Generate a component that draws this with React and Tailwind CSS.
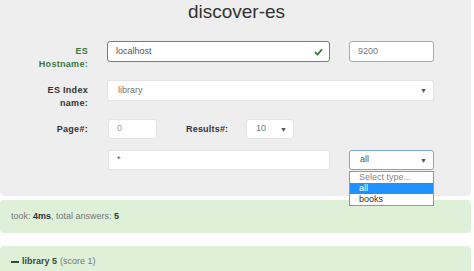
import React from "react";

const font = { fontFamily: "'Liberation Sans', Arial, sans-serif" };

const Caret = () => (
  <span className="text-[7px] leading-none text-[#555]">&#9660;</span>
);

export default function App() {
  return (
    <div
      className="w-[474px] h-[271px] overflow-hidden bg-white text-[#555]"
      style={font}
    >
      {/* jumbotron */}
      <div className="w-[471px] h-[196px] bg-[#eeeeee] rounded-b-[5px] pt-[1px]">
        <h1 className="text-center text-[19px] leading-[22px] text-[#333] ml-[2px]">
          discover-es
        </h1>

        <div className="mt-[18px] flex flex-col">
          {/* hostname row */}
          <div className="flex h-[21px]">
            <label className="w-[88px] pt-[4px] text-right text-[9px] leading-[13px] font-bold text-[#3c763d] tracking-[0.3px]">
              ES
              <br />
              Hostname:
            </label>
            <div className="ml-[19px] relative w-[223px] h-[21px] bg-white border border-[#5f8f5a] rounded-[3px] flex items-center pl-[8px] text-[9px]">
              localhost
              <svg
                className="absolute right-[6px] top-[6px]"
                width="9"
                height="8"
                viewBox="0 0 9 8"
              >
                <path
                  d="M1 4.2 L3.4 6.5 L8 1.3"
                  fill="none"
                  stroke="#3c763d"
                  strokeWidth="1.8"
                />
              </svg>
            </div>
            <div className="ml-[19px] w-[85px] h-[21px] bg-white border border-[#9fb39b] rounded-[3px] flex items-center pl-[8px] text-[9px] text-[#777]">
              9200
            </div>
          </div>

          {/* index row */}
          <div className="flex h-[21px] mt-[18px]">
            <label className="w-[88px] pt-[4px] text-right text-[9px] leading-[13px] font-bold text-[#333] tracking-[0.3px]">
              ES Index
              <br />
              name:
            </label>
            <div className="ml-[19px] w-[327px] h-[21px] bg-white border border-[#e4e4e4] rounded-[3px] flex items-center justify-between pl-[10px] pr-[6px] text-[9px] text-[#777]">
              library
              <Caret />
            </div>
          </div>

          {/* paging row */}
          <div className="flex h-[20px] mt-[18px]">
            <label className="w-[88px] pt-[4px] text-right text-[9px] leading-[13px] font-bold text-[#333] tracking-[0.3px]">
              Page#:
            </label>
            <div className="ml-[20px] w-[49px] h-[20px] bg-white border border-[#e4e4e4] rounded-[3px] flex items-center pl-[8px] text-[9px] text-[#999]">
              0
            </div>
            <label className="ml-[29px] w-[41px] pt-[4px] text-[9px] leading-[13px] font-bold text-[#333] tracking-[0.2px]">
              Results#:
            </label>
            <div className="ml-[19px] w-[48px] h-[20px] bg-white border border-[#e4e4e4] rounded-[3px] flex items-center justify-between pl-[9px] pr-[6px] text-[9px] text-[#777]">
              10
              <Caret />
            </div>
          </div>

          {/* query row */}
          <div className="flex h-[20px] mt-[11px]">
            <div className="ml-[108px] w-[222px] h-[20px] bg-white border border-[#e4e4e4] rounded-[3px] flex items-center pl-[8px] text-[9px]">
              *
            </div>
            <div className="ml-[19px] relative w-[85px] h-[20px] bg-white border border-[#79a6d6] rounded-[3px] flex items-center justify-between pl-[10px] pr-[6px] text-[9px]">
              all
              <Caret />
              <div className="absolute left-[-1px] top-[20px] w-[85px] bg-white border border-[#7f9db9] text-[9px] leading-[11px] z-10">
                <div className="pl-[9px] text-[#888]">Select type...</div>
                <div className="pl-[9px] bg-[#1e90ff] text-white">all</div>
                <div className="pl-[9px] text-[#333]">books</div>
              </div>
            </div>
          </div>
        </div>
      </div>

      {/* stats */}
      <div className="mt-[4px] w-[471px] h-[33px] bg-[#dff0d8] rounded-[4px] flex items-center pl-[11px] text-[9px] text-[#777]">
        <span>
          took: <b className="text-[#333]">4ms</b>, total answers:{" "}
          <b className="text-[#333]">5</b>
        </span>
      </div>

      {/* result */}
      <div className="mt-[13px] w-[471px] h-[33px] bg-[#dff0d8] rounded-[4px] flex items-start pt-[9px] pl-[11px] text-[9px] text-[#777]">
        <span className="flex items-center">
          <span className="inline-block w-[8px] h-[2px] bg-[#3b4a38] mr-[3px]"></span>
          <b className="text-[#3b4a38]">library 5</b>
          <span className="ml-[3px]">(score 1)</span>
        </span>
      </div>
    </div>
  );
}
